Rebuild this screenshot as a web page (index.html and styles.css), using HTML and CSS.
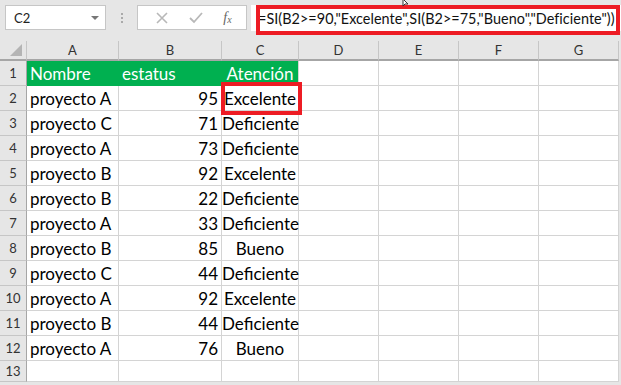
FILE: index.html
```html
<!DOCTYPE html>
<html lang="es">
<head>
  <meta charset="UTF-8">
  <meta name="viewport" content="width=device-width, initial-scale=1.0">
  <title>Hoja de cálculo</title>
  <link rel="stylesheet" href="styles.css">
</head>
<body>
  <!-- Barra de fórmulas -->
  <div class="barra">
    <div class="nombre-celda">
      <span>C2</span>
      <span class="flecha"></span>
    </div>
    <div class="puntos"><i></i><i></i><i></i></div>
    <div class="botones">
      <span class="btn-x">
        <svg viewBox="0 0 12 12" width="12" height="12"><path d="M1 1 L11 11 M11 1 L1 11" stroke="#b8b8b8" stroke-width="1.6" fill="none"/></svg>
      </span>
      <span class="btn-ok">
        <svg viewBox="0 0 14 12" width="14" height="12"><path d="M1 6 L5 10 L13 1" stroke="#b8b8b8" stroke-width="1.8" fill="none"/></svg>
      </span>
      <span class="btn-fx">f<small>x</small></span>
    </div>
    <div class="formula">=SI(B2&gt;=90,"Excelente",SI(B2&gt;=75,"Bueno","Deficiente"))</div>
    <div class="marca marca-formula"></div>
    <svg class="cursor" viewBox="0 0 8 8" width="8" height="8"><path d="M1 0 L1 7 L3 5 L6 5 Z" fill="#fff" stroke="#333" stroke-width="1"/></svg>
  </div>

  <!-- Hoja -->
  <div class="hoja-wrap">
    <div class="hoja" id="hoja"></div>
    <div class="marca marca-celda"></div>
  </div>

  <script>
    const columnas = ['A', 'B', 'C', 'D', 'E', 'F', 'G'];

    const datos = [
      ['proyecto A', 95, 'Excelente'],
      ['proyecto C', 71, 'Deficiente'],
      ['proyecto A', 73, 'Deficiente'],
      ['proyecto B', 92, 'Excelente'],
      ['proyecto B', 22, 'Deficiente'],
      ['proyecto A', 33, 'Deficiente'],
      ['proyecto B', 85, 'Bueno'],
      ['proyecto C', 44, 'Deficiente'],
      ['proyecto A', 92, 'Excelente'],
      ['proyecto B', 44, 'Deficiente'],
      ['proyecto A', 76, 'Bueno']
    ];

    const hoja = document.getElementById('hoja');
    let html = '<div class="esquina"><span></span></div>';
    html += columnas.map(c => `<div class="col-cab">${c}</div>`).join('');

    // fila 1: encabezados
    html += '<div class="fila-cab">1</div>';
    html += '<div class="celda verde">Nombre</div>';
    html += '<div class="celda verde">estatus</div>';
    html += '<div class="celda verde centro fin-verde">Atención</div>';
    html += '<div class="celda"></div>'.repeat(4);

    datos.forEach((fila, i) => {
      html += `<div class="fila-cab">${i + 2}</div>`;
      html += `<div class="celda">${fila[0]}</div>`;
      html += `<div class="celda derecha">${fila[1]}</div>`;
      html += `<div class="celda centro">${fila[2]}</div>`;
      html += '<div class="celda"></div>'.repeat(4);
    });

    html += '<div class="fila-cab corta">13</div>';
    html += '<div class="celda corta"></div>'.repeat(7);

    hoja.innerHTML = html;
  </script>
</body>
</html>
```

FILE: styles.css
```css
body {
  margin: 0;
  background-color: #e6e6e6;
  font-family: Lato, "Open Sans", sans-serif;
  width: 621px;
  height: 385px;
  overflow: hidden;
}

.barra {
  position: relative;
  display: flex;
  align-items: flex-start;
  height: 41px;
  padding: 5px 0 0 5px;
  box-sizing: border-box;
}

.nombre-celda {
  display: flex;
  align-items: center;
  justify-content: space-between;
  width: 101px;
  height: 25px;
  box-sizing: border-box;
  padding: 0 6px 0 8px;
  background-color: #fff;
  border: 1px solid #c6c6c6;
  font-size: 13px;
  color: #222;
}

.flecha {
  width: 0;
  height: 0;
  border-left: 4px solid transparent;
  border-right: 4px solid transparent;
  border-top: 4px solid #777;
}

.puntos {
  display: flex;
  flex-direction: column;
  gap: 2px;
  width: 31px;
  align-items: center;
  padding-top: 8px;
}

.puntos i {
  display: block;
  width: 2px;
  height: 2px;
  background-color: #aaa;
}

.botones {
  display: flex;
  align-items: center;
  justify-content: space-around;
  width: 110px;
  height: 25px;
  box-sizing: border-box;
  background-color: #fff;
  border: 1px solid #c6c6c6;
  padding: 0 4px 0 8px;
}

.botones span {
  display: flex;
  align-items: center;
}

.btn-fx {
  font-family: "Liberation Serif", serif;
  font-style: italic;
  font-size: 14px;
  color: #666;
}

.btn-fx small {
  font-size: 10px;
  margin-top: 3px;
}

.formula {
  margin-left: 4px;
  flex: 1;
  height: 26px;
  background-color: #fff;
  font-size: 14.4px;
  letter-spacing: 0.05px;
  line-height: 27px;
  padding-left: 7px;
  color: #111;
  white-space: nowrap;
  overflow: hidden;
}

.marca {
  position: absolute;
  border: 4px solid #ed1c24;
  box-sizing: border-box;
  pointer-events: none;
}

.marca-formula {
  left: 256px;
  top: 5px;
  width: 364px;
  height: 30px;
}

.cursor {
  position: absolute;
  left: 402px;
  top: -1px;
}

.hoja-wrap {
  position: relative;
}

.hoja {
  display: grid;
  grid-template-columns: 27px 92px 103px 77px 80px 80px 80px 80px;
  grid-template-rows: 20px repeat(12, 25px) 21px;
}

.esquina {
  position: relative;
  background-color: #e6e6e6;
  border-right: 1px solid #c6c6c6;
  border-bottom: 2px solid #a6a6a6;
}

.esquina span {
  position: absolute;
  right: 4px;
  bottom: 3px;
  width: 0;
  height: 0;
  border-left: 12px solid transparent;
  border-bottom: 12px solid #b4b4b4;
}

.col-cab {
  background-color: #e6e6e6;
  border-right: 1px solid #c6c6c6;
  border-bottom: 2px solid #a6a6a6;
  font-size: 13px;
  color: #333;
  text-align: center;
  line-height: 19px;
}

.fila-cab {
  background-color: #e6e6e6;
  border-right: 1px solid #a6a6a6;
  border-bottom: 1px solid #c6c6c6;
  font-size: 13px;
  color: #333;
  text-align: center;
  line-height: 25px;
}

.celda {
  background-color: #fff;
  border-right: 1px solid #d4d4d4;
  border-bottom: 1px solid #d4d4d4;
  font-size: 17px;
  line-height: 26px;
  padding: 0 3px;
  color: #000;
  white-space: nowrap;
}

.celda.corta,
.fila-cab.corta {
  line-height: 21px;
}

.verde {
  background-color: #00b050;
  border-right-color: #00b050;
  border-bottom-color: #00b050;
  color: #fff;
}

.fin-verde {
  border-right-color: #d4d4d4;
}

.derecha {
  text-align: right;
}

.centro {
  text-align: center;
  padding: 0;
  overflow: visible;
}

.marca-celda {
  left: 221px;
  top: 41px;
  width: 81px;
  height: 33px;
}
```
